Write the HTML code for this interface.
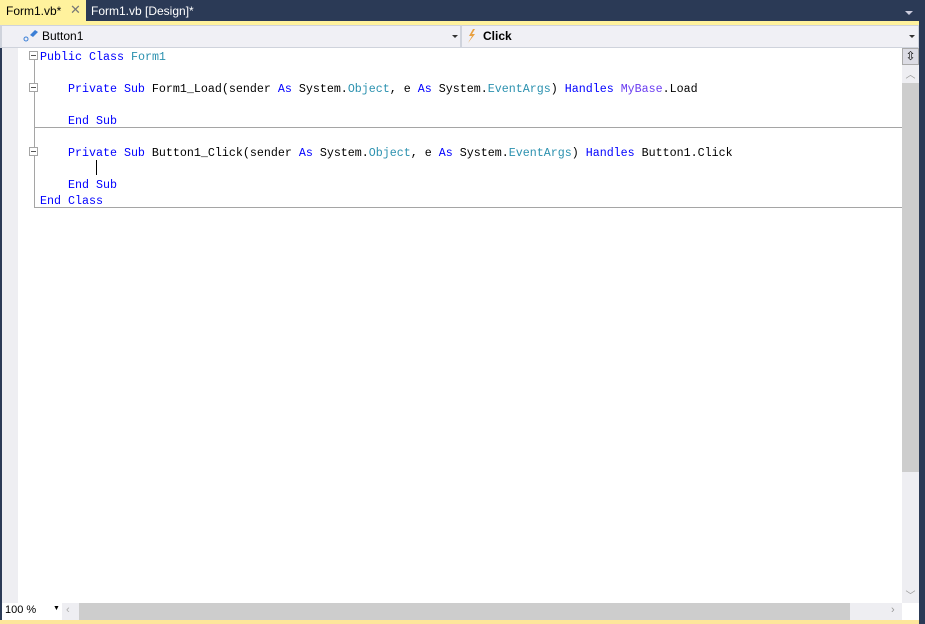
<!DOCTYPE html>
<html><head><meta charset="utf-8"><style>
*{margin:0;padding:0;box-sizing:border-box}
body{width:925px;height:624px;background:#2b3a56;position:relative;overflow:hidden;font-family:"Liberation Sans",sans-serif}
.abs{position:absolute}
.tab1{left:0;top:0;width:86px;height:22px;background:#fff29d;font-size:12px;color:#000;padding:4px 0 0 6px}
.tab2{left:91px;top:4px;font-size:12px;color:#fff}
.yl{left:0;top:21px;width:919px;height:4px;background:#fff29d}
.nav{left:0;top:25px;width:919px;height:23px;background:#cfd3dc}
.dd{top:26px;height:21px;background:#f0f0f5;font-size:12px}
.ed{left:2px;top:48px;width:900px;height:555px;background:#fff}
.mg{left:2px;top:48px;width:16px;height:555px;background:#eeeef2}
.code{left:40px;top:49px;font-family:"Liberation Mono",monospace;font-size:11.67px;line-height:16px;white-space:pre;color:#000}
.k{color:#0000ff}.t{color:#2b91af}
.ol{background:#a5a5a5}
.bx{width:9px;height:9px;border:1px solid #a5a5a5;background:#fff}
.bx:after{content:"";position:absolute;left:1px;top:3px;width:5px;height:1px;background:#555}
</style></head><body>
<div class="abs tab1">Form1.vb*<span style="position:absolute;left:70px;top:2px;font-size:13px;color:#777">✕</span></div>
<div class="abs tab2">Form1.vb [Design]*</div>
<div class="abs" style="left:905px;top:11px;width:0;height:0;border-left:4px solid transparent;border-right:4px solid transparent;border-top:4px solid #ccd"></div>
<div class="abs yl"></div>
<div class="abs nav"></div>
<div class="abs dd" style="left:2px;width:458px;padding:3px 0 0 40px">Button1</div>
<svg class="abs" style="left:22px;top:28px" width="18" height="14"><path d="M8 7 L13 2 L16 4 L11 9Z" fill="#3b7fd6"/><circle cx="4" cy="11" r="2" fill="none" stroke="#3b7fd6"/></svg>
<div class="abs" style="left:452px;top:35px;border-left:3px solid transparent;border-right:3px solid transparent;border-top:3px solid #333"></div>
<div class="abs dd" style="left:462px;width:456px;padding:3px 0 0 21px;font-weight:bold">Click</div>
<svg class="abs" style="left:466px;top:28px" width="10" height="16"><path d="M7 1 L3 8 L6 8 L2 15 L9 6 L6 6 L9 1Z" fill="#e8a040"/></svg>
<div class="abs" style="left:909px;top:35px;border-left:3px solid transparent;border-right:3px solid transparent;border-top:3px solid #333"></div>
<div class="abs ed"></div>
<div class="abs mg"></div>
<div class="abs ol" style="left:34px;top:60px;width:1px;height:148px"></div>
<div class="abs ol" style="left:34px;top:207px;width:868px;height:1px"></div>
<div class="abs ol" style="left:34px;top:127px;width:868px;height:1px"></div>
<div class="abs bx" style="left:29px;top:51px"></div>
<div class="abs bx" style="left:29px;top:83px"></div>
<div class="abs bx" style="left:29px;top:147px"></div>
<div class="code abs"><span class="k">Public Class</span> <span class="t">Form1</span>

    <span class="k">Private Sub</span> Form1_Load(sender <span class="k">As</span> System.<span class="t">Object</span>, e <span class="k">As</span> System.<span class="t">EventArgs</span>) <span class="k">Handles</span> <span style="color:#6a3cf0">MyBase</span>.Load

    <span class="k">End Sub</span>

    <span class="k">Private Sub</span> Button1_Click(sender <span class="k">As</span> System.<span class="t">Object</span>, e <span class="k">As</span> System.<span class="t">EventArgs</span>) <span class="k">Handles</span> Button1.Click

    <span class="k">End Sub</span>
<span class="k">End Class</span></div>
<div class="abs" style="left:96px;top:160px;width:1px;height:15px;background:#000"></div>
<div class="abs" style="left:902px;top:48px;width:17px;height:555px;background:#eeeef2"></div>
<div class="abs" style="left:902px;top:48px;width:17px;height:17px;background:#dcdce4;border:1px solid #aaa;font-size:12px;text-align:center;line-height:14px">⇳</div>
<div class="abs" style="left:902px;top:66px;width:17px;height:16px;font-size:10px;color:#999;text-align:center">︿</div>
<div class="abs" style="left:902px;top:83px;width:17px;height:389px;background:#cdcdcd"></div>
<div class="abs" style="left:902px;top:587px;width:17px;height:16px;font-size:10px;color:#999;text-align:center">﹀</div>
<div class="abs" style="left:2px;top:603px;width:900px;height:17px;background:#eeeef2"></div>
<div class="abs" style="left:2px;top:603px;width:60px;height:17px;background:#fff;font-size:11px;padding:1px 0 0 3px">100 %<span style="position:absolute;left:51px;top:2px;font-size:7px">▼</span></div>
<div class="abs" style="left:66px;top:604px;font-size:11px;color:#aaa">‹</div>
<div class="abs" style="left:79px;top:603px;width:771px;height:17px;background:#cdcdcd"></div>
<div class="abs" style="left:891px;top:604px;font-size:11px;color:#999">›</div>
<div class="abs" style="left:902px;top:603px;width:17px;height:17px;background:#fff"></div>
<div class="abs" style="left:0;top:620px;width:919px;height:4px;background:#fde69b"></div>
</body></html>
